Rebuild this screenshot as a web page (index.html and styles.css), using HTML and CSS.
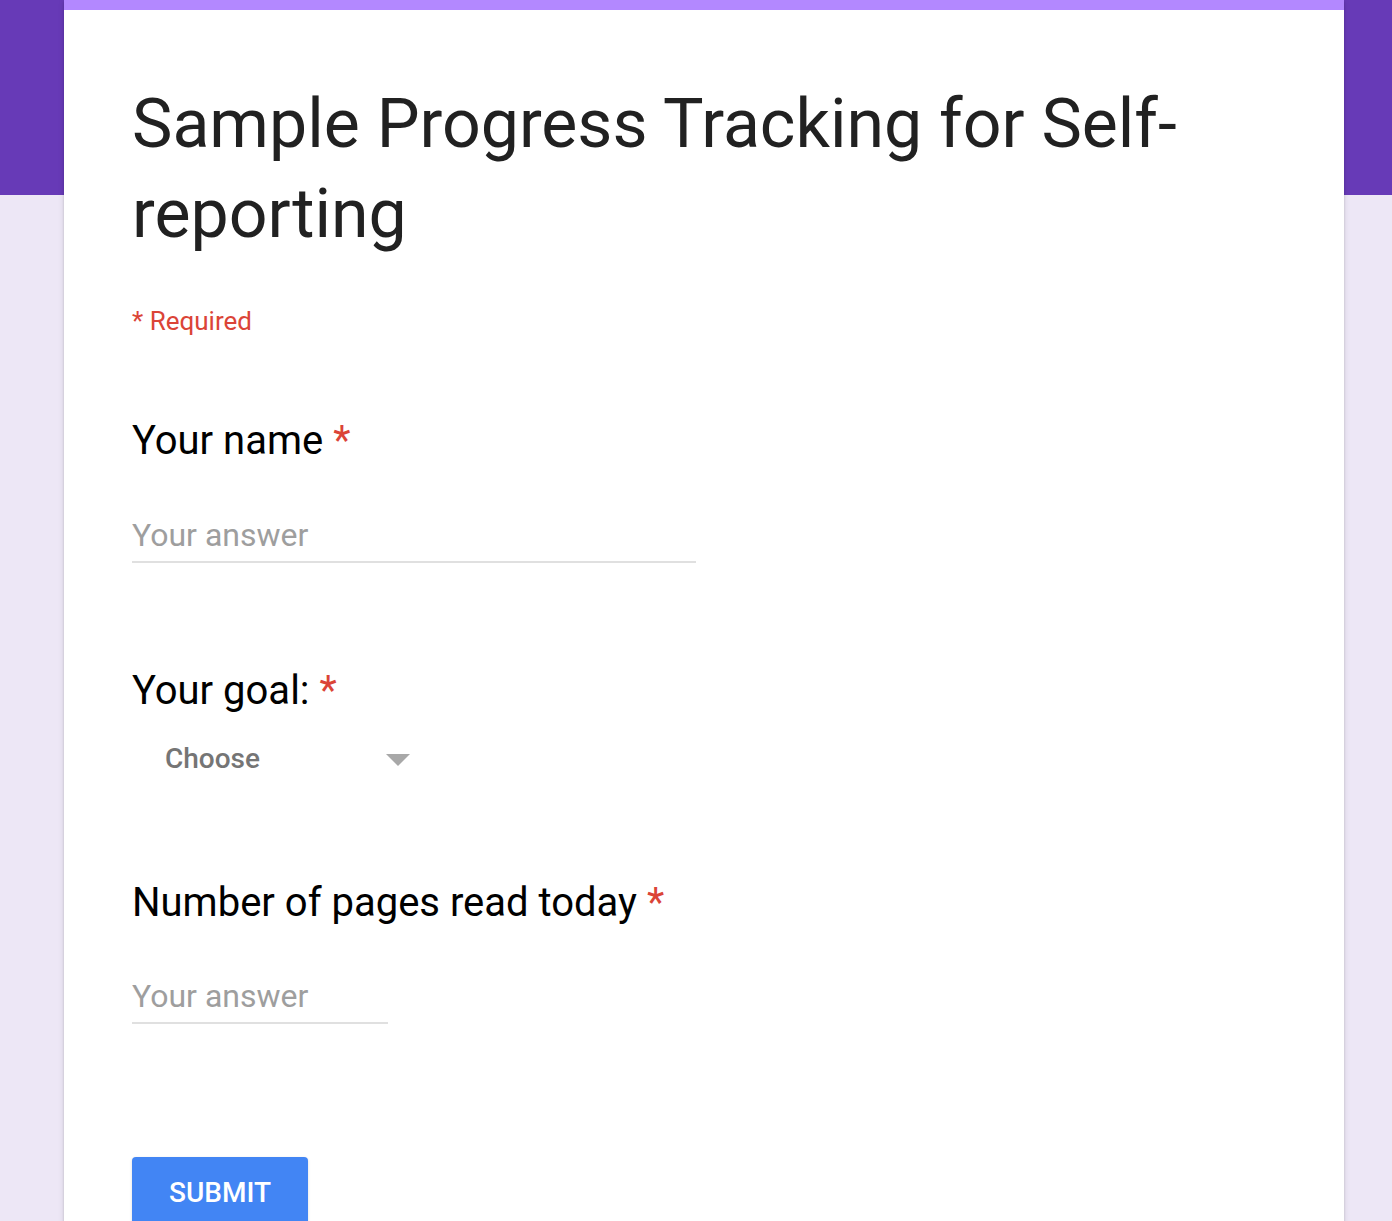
FILE: index.html
```html
<!DOCTYPE html>
<html lang="en">
<head>
<meta charset="utf-8">
<title>Sample Progress Tracking for Self-reporting</title>
<link rel="stylesheet" href="styles.css">
</head>
<body>
<div class="page">
  <form class="card">
    <h1 class="form-title">Sample Progress Tracking for Self-reporting</h1>
    <div class="required-note">* Required</div>

    <div class="question q-name">
      <div class="q-title">Your name <span class="star">*</span></div>
      <input class="answer answer-wide" type="text" placeholder="Your answer">
    </div>

    <div class="question q-goal">
      <div class="q-title">Your goal: <span class="star">*</span></div>
      <div class="dropdown">
        <span class="dropdown-text">Choose</span>
        <span class="dropdown-arrow"></span>
      </div>
    </div>

    <div class="question q-pages">
      <div class="q-title">Number of pages read today <span class="star">*</span></div>
      <input class="answer answer-narrow" type="text" placeholder="Your answer">
    </div>

    <div class="actions">
      <button class="submit" type="button">SUBMIT</button>
    </div>
  </form>
</div>
</body>
</html>
```

FILE: styles.css
```css
html, body {
  margin: 0;
  padding: 0;
}

body {
  background: linear-gradient(to bottom, #673ab7 0, #673ab7 195px, #ede7f6 195px, #ede7f6 100%);
  background-color: #ede7f6;
  font-family: Roboto, "Liberation Sans", Arial, sans-serif;
  min-height: 1221px;
}

.page {
  padding-left: 64px;
}

.card {
  width: 1280px;
  box-sizing: border-box;
  background: #ffffff;
  border-top: 10px solid #b388ff;
  padding: 69px 68px 80px 68px;
  box-shadow: 0 2px 2px rgba(0, 0, 0, 0.14), 0 3px 2px -2px rgba(0, 0, 0, 0.2), 0 1px 6px rgba(0, 0, 0, 0.12);
  display: flex;
  flex-direction: column;
  align-items: flex-start;
}

.form-title {
  margin: 0;
  font-weight: 400;
  font-size: 68px;
  line-height: 90px;
  color: #212121;
  width: 100%;
}

.required-note {
  margin-top: 43px;
  font-size: 26px;
  line-height: 39px;
  color: #db4437;
}

.question {
  display: flex;
  flex-direction: column;
  align-items: flex-start;
}

.q-name { margin-top: 76px; }
.q-goal { margin-top: 104px; }
.q-pages { margin-top: 102px; }

.q-title {
  font-size: 40px;
  line-height: 48px;
  color: #000000;
}

.star {
  color: #db4437;
}

.answer {
  margin-top: 50px;
  border: none;
  border-bottom: 2px solid #e0e0e0;
  outline: none;
  padding: 0 0 6px 0;
  font-family: Roboto, "Liberation Sans", Arial, sans-serif;
  font-size: 32px;
  line-height: 40px;
  height: 48px;
  box-sizing: border-box;
  background: transparent;
  color: #212121;
}

.answer::placeholder {
  color: #9e9e9e;
  opacity: 1;
}

.answer-wide { width: 564px; }
.answer-narrow { width: 256px; margin-top: 49px; }

.dropdown {
  margin-top: 26px;
  display: flex;
  align-items: center;
  padding-left: 33px;
  height: 36px;
}

.dropdown-text {
  font-size: 28px;
  line-height: 36px;
  font-weight: 500;
  color: #757575;
  width: 221px;
}

.dropdown-arrow {
  width: 0;
  height: 0;
  border-left: 12px solid transparent;
  border-right: 12px solid transparent;
  border-top: 12px solid #a8a8a8;
  margin-top: 2px;
}

.actions {
  margin-top: 133px;
}

.submit {
  display: block;
  height: 72px;
  padding: 0 37px;
  border: none;
  border-radius: 4px;
  background: #4285f4;
  color: #ffffff;
  font-family: Roboto, "Liberation Sans", Arial, sans-serif;
  font-size: 28px;
  font-weight: 500;
  line-height: 72px;
  box-shadow: 0 1px 3px rgba(0, 0, 0, 0.15);
}
```
